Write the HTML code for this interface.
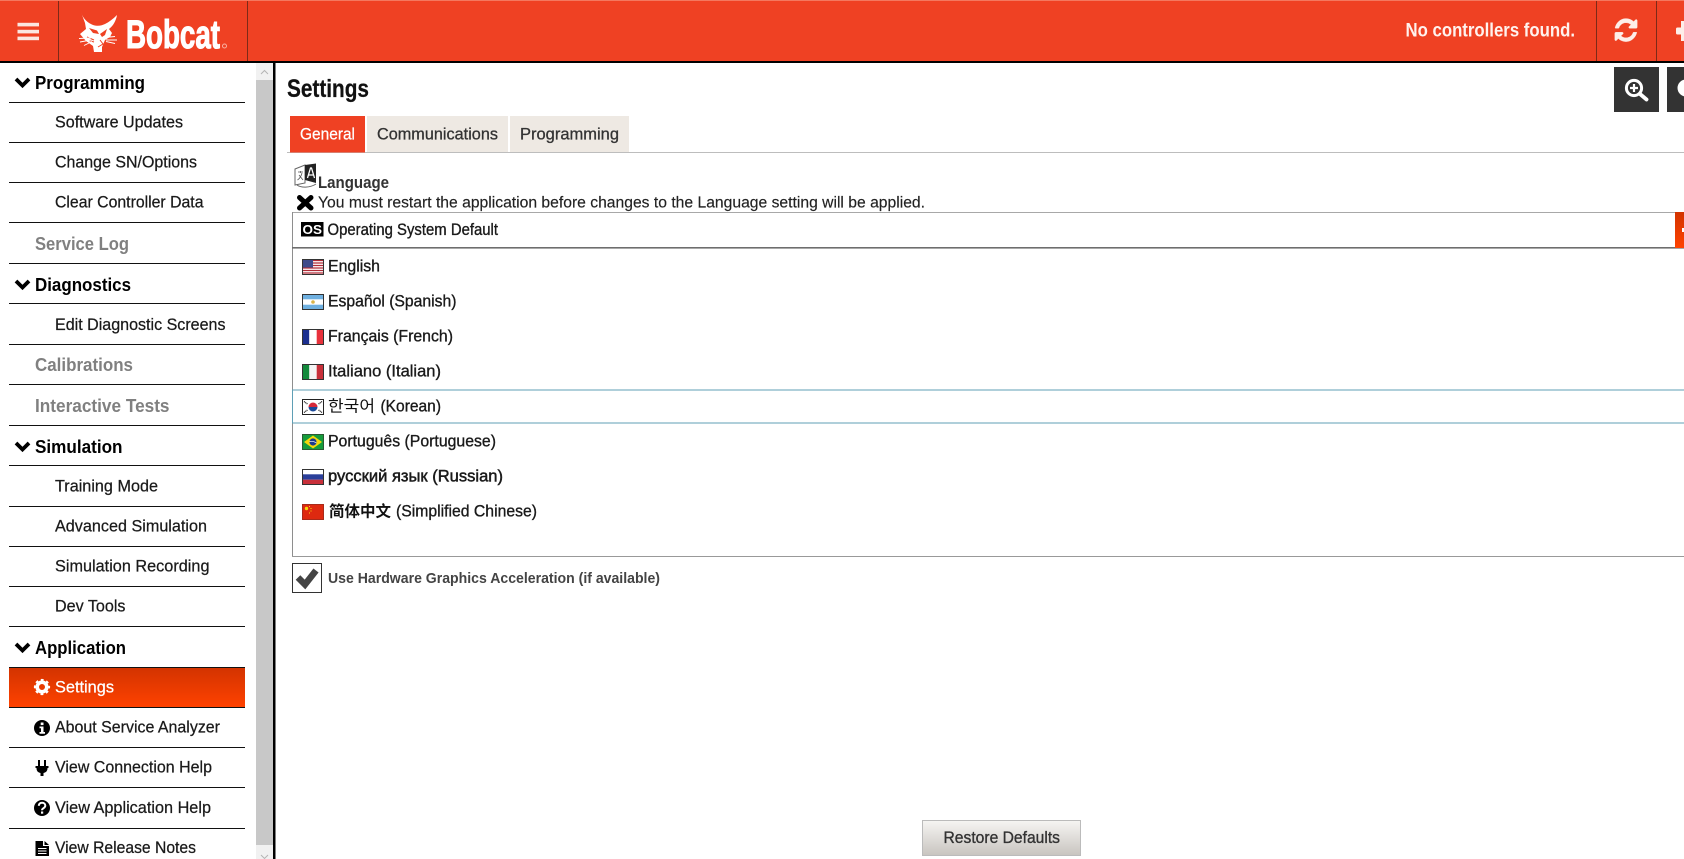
<!DOCTYPE html>
<html lang="en">
<head>
<meta charset="utf-8">
<title>Settings</title>
<style>
html,body{margin:0;padding:0;width:1684px;height:859px;overflow:hidden;background:#fff}
svg{display:block}
text{font-family:"Liberation Sans","Noto Sans CJK KR",sans-serif;white-space:pre}
.h{font-size:18.5px;font-weight:bold;fill:#000}
.g{font-size:18.5px;font-weight:bold;fill:#808080}
.s{font-size:17px;fill:#1a1a1a;stroke:#1a1a1a;stroke-width:.25}
.l{font-size:17px;fill:#1a1a1a;stroke:#1a1a1a;stroke-width:.35}
</style>
</head>
<body>
<svg xmlns="http://www.w3.org/2000/svg" width="1684" height="859" viewBox="0 0 1684 859">
<defs>
<linearGradient id="act" x1="0" y1="0" x2="0" y2="1"><stop offset="0" stop-color="#d23300"/><stop offset="1" stop-color="#ff4200"/></linearGradient>
<linearGradient id="btn" x1="0" y1="0" x2="0" y2="1"><stop offset="0" stop-color="#f6f5f3"/><stop offset="1" stop-color="#c8c4bf"/></linearGradient>
</defs>

<!-- header -->
<rect x="0" y="0" width="1684" height="61" fill="#ef4123"/>
<rect x="0" y="0" width="1684" height="1" fill="#f4785f"/>
<rect x="0" y="61" width="1684" height="2" fill="#000"/>
<rect x="58" y="1" width="1" height="60" fill="#7d2a18"/>
<rect x="247" y="1" width="1" height="60" fill="#7d2a18"/>
<rect x="1596" y="1" width="1" height="60" fill="#7d2a18"/>
<rect x="1656" y="1" width="1" height="60" fill="#7d2a18"/>
<rect x="17.5" y="22.800" width="21.500" height="3.600" fill="#fbe6e0"/>
<rect x="17.5" y="29.800" width="21.500" height="3.600" fill="#fbe6e0"/>
<rect x="17.5" y="36.600" width="21.500" height="3.600" fill="#fbe6e0"/>

<!-- logo -->
<path d="M81 12C83 19 88 23 93 25C98 26.500 102 25.500 105 24C109 22 113 19 117 15C116 21 113 26 109 29L112 33L110 37L105 40L102 47L102 52L94 52L93 46L86 41L80 34L86 29L85 23Z" fill="#fff"/>
<path d="M89 28L97 30.500L99 34L93 33ZM100 34L107 29L105 35L102 37Z" fill="#ef4123"/>
<path d="M87 37L94 40M89 40.500L94 42M100 40L103 44L98 47" stroke="#ef4123" stroke-width="1" fill="none"/>
<path d="M79 38.500L91 38M80 42L91 40M84 45.500L92 41.500M106 40L117 40M106 41.500L115 43.500M105 37.500L115 36.500" stroke="#fff" stroke-width=".9" fill="none"/>
<text x="126" y="48" textLength="94" lengthAdjust="spacingAndGlyphs" style="font-size:40px;font-weight:bold;fill:#fff;stroke:#fff;stroke-width:1.100">Bobcat</text>
<circle cx="224.500" cy="46" r="2" fill="none" stroke="#f9b0a0" stroke-width="1"/>

<text x="1405.500" y="36.500" textLength="169.500" lengthAdjust="spacingAndGlyphs" style="font-size:19px;font-weight:bold;fill:#fff2ee">No controllers found.</text>
<path transform="translate(1626 31) scale(.0145) translate(-896 -960)" fill="#fdeee9" stroke="#fdeee9" stroke-width="30" d="M1639 1056q0 5-1 7-64 268-268 447t-478 179q-146 0-282.500-55t-243.500-157l-129 129q-19 19-45 19t-45-19-19-45v-448q0-26 19-45t45-19h448q26 0 45 19t19 45-19 45l-137 137q71 66 161 102t187 36q134 0 250-65t186-179q11-17 53-117 8-23 30-23h192q13 0 22.500 9.500t9.500 22.500zm25-800v448q0 26-19 45t-45 19h-448q-26 0-45-19t-19-45 19-45l138-138q-148-137-349-137-134 0-250 65t-186 179q-11 17-53 117-8 23-30 23h-199q-13 0-22.500-9.500t-9.500-22.500v-7q65-268 270-447t480-179q146 0 284 55.500t245 156.500l130-129q19-19 45-19t45 19 19 45z"/>
<rect x="1676" y="27.500" width="8" height="7" rx="1.500" fill="#fdeee9"/>
<rect x="1681" y="21" width="3" height="20" fill="#fdeee9"/>

<!-- sidebar scrollbar + divider -->
<rect x="256" y="63" width="17" height="796" fill="#f1f1f1"/>
<rect x="256" y="80" width="17" height="765" fill="#c8c8c8"/>
<path d="M261 74L264.500 70.500L268 74M261 855L264.500 858.500L268 855" fill="none" stroke="#b5b5b5" stroke-width="1"/>
<rect x="273" y="63" width="2.500" height="796" fill="#000"/>

<!-- sidebar lines -->
<g fill="#111">
<rect x="9" y="102" width="236" height="1"/><rect x="9" y="142" width="236" height="1"/><rect x="9" y="182" width="236" height="1"/>
<rect x="9" y="222" width="236" height="1"/><rect x="9" y="263" width="236" height="1"/><rect x="9" y="303" width="236" height="1"/>
<rect x="9" y="344" width="236" height="1"/><rect x="9" y="384" width="236" height="1"/><rect x="9" y="425" width="236" height="1"/>
<rect x="9" y="465" width="236" height="1"/><rect x="9" y="506" width="236" height="1"/><rect x="9" y="546" width="236" height="1"/>
<rect x="9" y="586" width="236" height="1"/><rect x="9" y="626" width="236" height="1"/>
<rect x="9" y="747" width="236" height="1"/><rect x="9" y="787" width="236" height="1"/><rect x="9" y="828" width="236" height="1"/>
</g>
<rect x="9" y="667" width="236" height="40.500" fill="url(#act)"/>
<rect x="9" y="667" width="236" height="1" fill="#111"/>
<rect x="9" y="707" width="236" height="1" fill="#111"/>

<!-- sidebar chevrons -->
<g fill="none" stroke="#000" stroke-width="3.800">
<path d="M16 79L22.500 85.500L29 79"/>
<path d="M16 281L22.500 287.500L29 281"/>
<path d="M16 443L22.500 449.500L29 443"/>
<path d="M16 644L22.500 650.500L29 644"/>
</g>

<!-- sidebar text -->
<text class="h" x="35" y="89" textLength="110" lengthAdjust="spacingAndGlyphs">Programming</text>
<text class="s" x="55" y="127.500" textLength="128" lengthAdjust="spacingAndGlyphs">Software Updates</text>
<text class="s" x="55" y="167.500" textLength="142" lengthAdjust="spacingAndGlyphs">Change SN/Options</text>
<text class="s" x="55" y="207.500" textLength="148.500" lengthAdjust="spacingAndGlyphs">Clear Controller Data</text>
<text class="g" x="35" y="250" textLength="94" lengthAdjust="spacingAndGlyphs">Service Log</text>
<text class="h" x="35" y="291" textLength="96" lengthAdjust="spacingAndGlyphs">Diagnostics</text>
<text class="s" x="55" y="330" textLength="170.500" lengthAdjust="spacingAndGlyphs">Edit Diagnostic Screens</text>
<text class="g" x="35" y="371" textLength="98" lengthAdjust="spacingAndGlyphs">Calibrations</text>
<text class="g" x="35" y="412" textLength="134.500" lengthAdjust="spacingAndGlyphs">Interactive Tests</text>
<text class="h" x="35" y="453" textLength="87.500" lengthAdjust="spacingAndGlyphs">Simulation</text>
<text class="s" x="55" y="491.500" textLength="103" lengthAdjust="spacingAndGlyphs">Training Mode</text>
<text class="s" x="55" y="531.500" textLength="152" lengthAdjust="spacingAndGlyphs">Advanced Simulation</text>
<text class="s" x="55" y="571.500" textLength="154.500" lengthAdjust="spacingAndGlyphs">Simulation Recording</text>
<text class="s" x="55" y="611.500" textLength="70.500" lengthAdjust="spacingAndGlyphs">Dev Tools</text>
<text class="h" x="35" y="654" textLength="91" lengthAdjust="spacingAndGlyphs">Application</text>
<text class="s" x="55" y="692.500" textLength="59" lengthAdjust="spacingAndGlyphs" style="fill:#fff;stroke:#fff">Settings</text>
<text class="s" x="55" y="732.500" textLength="165" lengthAdjust="spacingAndGlyphs">About Service Analyzer</text>
<text class="s" x="55" y="772.500" textLength="157" lengthAdjust="spacingAndGlyphs">View Connection Help</text>
<text class="s" x="55" y="813" textLength="156" lengthAdjust="spacingAndGlyphs">View Application Help</text>
<text class="s" x="55" y="853" textLength="141" lengthAdjust="spacingAndGlyphs">View Release Notes</text>

<!-- sidebar icons -->
<circle cx="42" cy="687" r="4.800" fill="none" stroke="#fff" stroke-width="3.600"/>
<circle cx="42" cy="687" r="7" fill="none" stroke="#fff" stroke-width="2.200" stroke-dasharray="2.750 2.750" stroke-dashoffset="1.400"/>
<circle cx="42" cy="728" r="8" fill="#000"/>
<rect x="40.700" y="722.500" width="2.800" height="2.600" fill="#fff"/>
<path d="M39.500 726.500H43.500V732H45V733.700H39.500V732H41V728.200H39.500Z" fill="#fff"/>
<path d="M38 760h2v6h4v-6h2v6h2.500v2H47.500c0 3-1.500 4.500-4 5v3h-3v-3c-2.500-.5-4-2-4-5H35.500v-2H38Z" fill="#000"/>
<circle cx="42" cy="808" r="8" fill="#000"/>
<path d="M38.800 805.800c.2-2 1.500-3 3.300-3 1.900 0 3.200 1.200 3.200 2.800 0 2.600-3.300 2.500-3.300 4.600" fill="none" stroke="#fff" stroke-width="2"/>
<rect x="41" y="811.500" width="2.200" height="2.200" fill="#fff"/>
<path d="M35.500 841H43V846H49V856H35.500ZM44.500 841L49 845H44.500Z" fill="#000"/>
<path d="M38 848.500H46.500M38 851H46.500M38 853.500H46.500" stroke="#fff" stroke-width="1"/>

<!-- content title -->
<text x="287" y="97" textLength="82" lengthAdjust="spacingAndGlyphs" style="font-size:25px;font-weight:bold;fill:#111;stroke:#111;stroke-width:.25">Settings</text>

<!-- top-right buttons -->
<rect x="1614" y="67" width="45" height="45" fill="#333"/>
<rect x="1667" y="67" width="17" height="45" fill="#333"/>
<circle cx="1634" cy="88" r="7.600" fill="none" stroke="#fff" stroke-width="3"/>
<path d="M1640 94L1646.500 99.500" stroke="#fff" stroke-width="3.800" stroke-linecap="round"/>
<path d="M1630 88H1638M1634 84V92" stroke="#fff" stroke-width="2.200"/>
<circle cx="1686" cy="88" r="8.500" fill="#fff"/>

<!-- tabs -->
<rect x="287" y="152" width="1397" height="1" fill="#bdbdbd"/>
<rect x="290" y="116" width="75" height="36.500" fill="#ef4123"/>
<rect x="367" y="116" width="141" height="36" fill="#eee9e3"/>
<rect x="510" y="116" width="119" height="36" fill="#eee9e3"/>
<text x="300" y="139.500" textLength="55" lengthAdjust="spacingAndGlyphs" style="font-size:17px;fill:#fff;stroke:#fff;stroke-width:.25">General</text>
<text x="377" y="139.500" textLength="121" lengthAdjust="spacingAndGlyphs" style="font-size:17px;fill:#333;stroke:#333;stroke-width:.3">Communications</text>
<text x="520" y="139.500" textLength="99" lengthAdjust="spacingAndGlyphs" style="font-size:17px;fill:#333;stroke:#333;stroke-width:.3">Programming</text>

<!-- language icon -->
<path d="M295 169L305 165L305 183L295 185Z" fill="#fff" stroke="#666" stroke-width="1"/>
<path d="M305 165L316 163.500V183L305 180Z" fill="#222"/>
<path d="M298 172H303M300.500 171V173M302 173C301 177 299 179 297.500 180M299 175L303 180" stroke="#555" stroke-width=".8" fill="none"/>
<path d="M307.500 178L310.500 168H311.500L314.500 178M308.500 175H313.500" stroke="#fff" stroke-width="1.300" fill="none"/>
<path d="M297 185C301 188 310 188 316 184" stroke="#666" stroke-width="1" fill="none"/>
<text x="318" y="188" textLength="71" lengthAdjust="spacingAndGlyphs" style="font-size:17px;font-weight:bold;fill:#333">Language</text>

<!-- warning -->
<path d="M299.500 197.500L311 208M311 197.500L299.500 208" stroke="#000" stroke-width="5" fill="none" stroke-linecap="round"/>
<text x="318" y="207.500" textLength="607" lengthAdjust="spacingAndGlyphs" style="font-size:15.500px;fill:#222;stroke:#222;stroke-width:.15">You must restart the application before changes to the Language setting will be applied.</text>

<!-- select -->
<rect x="292" y="212" width="1392" height="1" fill="#a8a8a8"/>
<rect x="292" y="212" width="1" height="344" fill="#8e8e8e"/>
<rect x="292" y="247" width="1392" height="1.600" fill="#6e6e6e"/>
<rect x="292" y="556" width="1392" height="1" fill="#999"/>
<rect x="301" y="222" width="22.500" height="14.500" fill="#000"/>
<text x="302.500" y="234" textLength="19.500" lengthAdjust="spacingAndGlyphs" style="font-size:13px;font-weight:bold;fill:#fff">OS</text>
<text class="l" x="327.500" y="235" textLength="170.500" lengthAdjust="spacingAndGlyphs" style="font-size:16.500px">Operating System Default</text>
<rect x="1675" y="212" width="9" height="36" fill="url(#act)"/>
<rect x="1682" y="228" width="2" height="4" fill="#fff"/>

<!-- Korean highlight -->
<rect x="292.500" y="390" width="1393" height="33" fill="#fff" stroke="#5f9fb5" stroke-width="1"/>

<!-- flags -->
<g>
<rect x="302" y="259" width="22" height="16" fill="#fff"/>
<path d="M302 260.500H324M302 263H324M302 265.500H324M302 268H324M302 270.500H324M302 273H324" stroke="#b02a36" stroke-width="1.300"/>
<rect x="302" y="259" width="11" height="8.500" fill="#3d4a8a"/>
<rect x="302.500" y="259.500" width="21" height="15" fill="none" stroke="#333" stroke-width="1"/>

<rect x="302" y="294" width="22" height="16" fill="#fff"/>
<rect x="302" y="294" width="22" height="5.300" fill="#6fb0e0"/>
<rect x="302" y="304.700" width="22" height="5.300" fill="#6fb0e0"/>
<circle cx="313" cy="302" r="1.800" fill="#d9b44a"/>
<rect x="302.500" y="294.500" width="21" height="15" fill="none" stroke="#333" stroke-width="1"/>

<rect x="302" y="329" width="7.300" height="16" fill="#1b2f8f"/>
<rect x="309.300" y="329" width="7.400" height="16" fill="#fff"/>
<rect x="316.700" y="329" width="7.300" height="16" fill="#e8323c"/>
<rect x="302.500" y="329.500" width="21" height="15" fill="none" stroke="#333" stroke-width="1"/>

<rect x="302" y="364" width="7.300" height="16" fill="#138a3c"/>
<rect x="309.300" y="364" width="7.400" height="16" fill="#f5f5f5"/>
<rect x="316.700" y="364" width="7.300" height="16" fill="#c8303a"/>
<rect x="302.500" y="364.500" width="21" height="15" fill="none" stroke="#333" stroke-width="1"/>

<rect x="302" y="399" width="22" height="16" fill="#fff"/>
<path d="M304 401.500L307.500 404M304 412.500L307.500 410M322 401.500L318.500 404M322 412.500L318.500 410" stroke="#222" stroke-width="1.300" stroke-dasharray="1 .6"/>
<path d="M308.500 407A4.500 4.500 0 0 1 317.500 407Z" fill="#d6293a"/>
<path d="M308.500 407A4.500 4.500 0 0 0 317.500 407Z" fill="#1c4a9a"/>
<rect x="302.500" y="399.500" width="21" height="15" fill="none" stroke="#222" stroke-width="1"/>

<rect x="302" y="434" width="22" height="16" fill="#169c3c"/>
<path d="M304 442L313 435.500L322 442L313 448.500Z" fill="#f5d90a"/>
<circle cx="313" cy="442" r="3.600" fill="#1c3a8e"/>
<path d="M309.500 441.500C312 441 315 442 316.500 443" stroke="#fff" stroke-width=".7" fill="none"/>
<rect x="302.500" y="434.500" width="21" height="15" fill="none" stroke="#2a5a33" stroke-width="1"/>

<rect x="302" y="469" width="22" height="5.300" fill="#fff"/>
<rect x="302" y="474.300" width="22" height="5.400" fill="#2a3f9a"/>
<rect x="302" y="479.700" width="22" height="5.300" fill="#c8303a"/>
<rect x="302.500" y="469.500" width="21" height="15" fill="none" stroke="#333" stroke-width="1"/>

<rect x="302" y="504" width="22" height="16" fill="#de2910"/>
<circle cx="306.500" cy="508.500" r="1.700" fill="#f6d90a"/>
<path d="M309.500 506V507M311 508V509M311 510.500V511.500M309.500 512.500V513.500" stroke="#f6d90a" stroke-width="1"/>
<rect x="302.500" y="504.500" width="21" height="15" fill="none" stroke="#a82a1a" stroke-width="1"/>
</g>

<!-- list text -->
<text class="l" x="328" y="271.500" textLength="52" lengthAdjust="spacingAndGlyphs">English</text>
<text class="l" x="328" y="306.500" textLength="128.500" lengthAdjust="spacingAndGlyphs">Español (Spanish)</text>
<text class="l" x="328" y="341.500" textLength="125" lengthAdjust="spacingAndGlyphs">Français (French)</text>
<text class="l" x="328" y="376.500" textLength="113" lengthAdjust="spacingAndGlyphs">Italiano (Italian)</text>
<text x="328" y="411.500" textLength="47" lengthAdjust="spacingAndGlyphs" style="font-family:'Noto Sans CJK KR','NanumGothic',sans-serif;font-size:16px;fill:#111">한국어</text>
<text class="l" x="380.500" y="411.500" textLength="60.500" lengthAdjust="spacingAndGlyphs">(Korean)</text>
<text class="l" x="328" y="446.500" textLength="168" lengthAdjust="spacingAndGlyphs">Português (Portuguese)</text>
<text class="l" x="328" y="481.500" textLength="175" lengthAdjust="spacingAndGlyphs" style="stroke-width:.5">русский язык (Russian)</text>
<text x="329" y="516.500" textLength="62" lengthAdjust="spacingAndGlyphs" style="font-family:'Noto Sans CJK SC',sans-serif;font-size:15.500px;font-weight:bold;fill:#111">简体中文</text>
<text class="l" x="396" y="516.500" textLength="141" lengthAdjust="spacingAndGlyphs">(Simplified Chinese)</text>

<!-- checkbox -->
<rect x="292.500" y="563.500" width="29" height="29" fill="#fff" stroke="#333" stroke-width="1"/>
<path d="M298 577.500L305 584.500L316 570.500" fill="none" stroke="#444" stroke-width="6.500"/>
<text x="328" y="583" textLength="332" lengthAdjust="spacingAndGlyphs" style="font-size:15px;font-weight:bold;fill:#444">Use Hardware Graphics Acceleration (if available)</text>

<!-- restore button -->
<rect x="922.500" y="820.500" width="158" height="35" fill="url(#btn)" stroke="#bbb" stroke-width="1"/>
<text x="943.500" y="843" textLength="116.500" lengthAdjust="spacingAndGlyphs" style="font-size:17px;fill:#333;stroke:#333;stroke-width:.35">Restore Defaults</text>
</svg>
</body>
</html>
